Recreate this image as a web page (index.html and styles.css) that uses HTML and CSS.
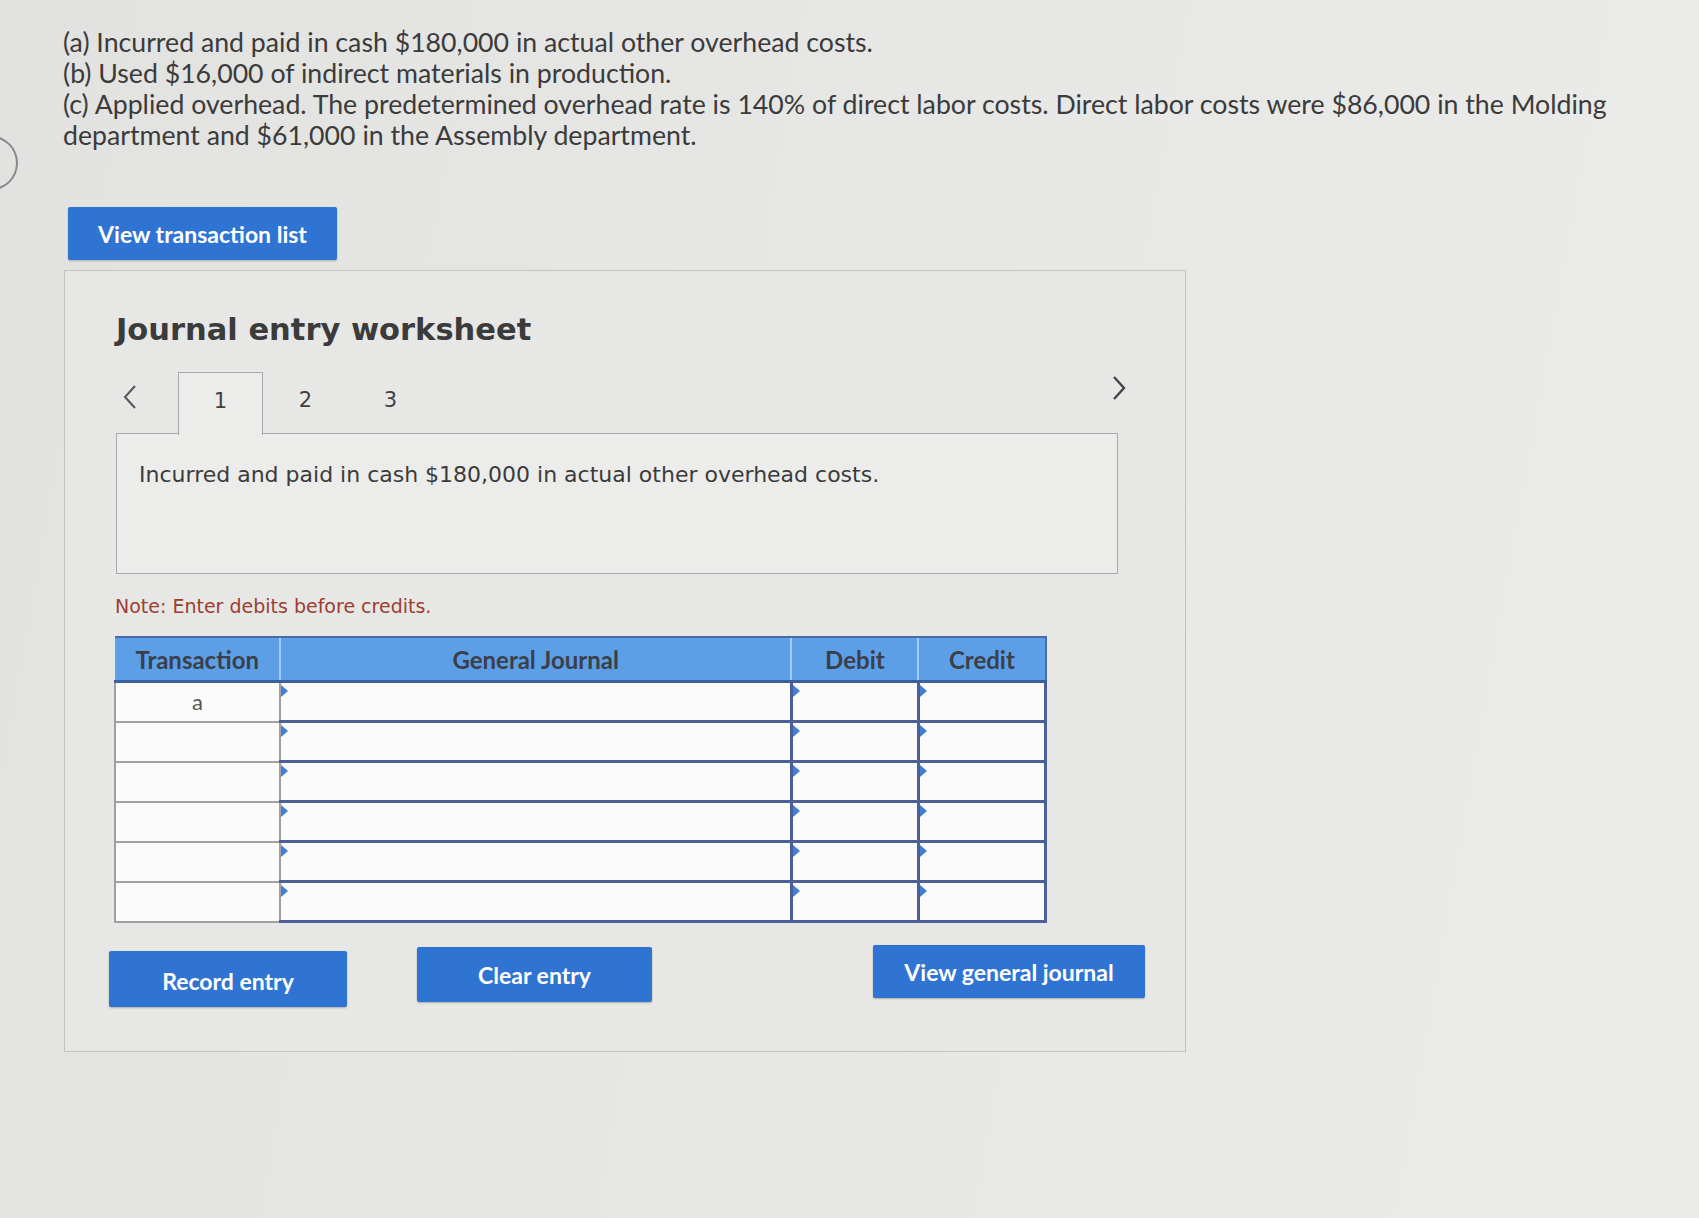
FILE: index.html
```html
<!DOCTYPE html>
<html lang="en">
<head>
    <meta charset="UTF-8">
    <meta name="viewport" content="width=device-width, initial-scale=1.0">
    <title>Journal entry worksheet</title>
    <link rel="stylesheet" href="styles.css">
</head>
<body>
    <div class="side-knob"></div>
    <div class="page">
        <div class="prompt">
            <p>(a) Incurred and paid in cash $180,000 in actual other overhead costs.</p>
            <p>(b) Used $16,000 of indirect materials in production.</p>
            <p>(c) Applied overhead. The predetermined overhead rate is 140% of direct labor costs. Direct labor costs were $86,000 in the Molding<br>department and $61,000 in the Assembly department.</p>
        </div>

        <button class="btn btn-list">View transaction list</button>

        <div class="worksheet">
            <h2 class="ws-title">Journal entry worksheet</h2>

            <div class="tabs">
                <span class="arrow arrow-prev">
                    <svg width="18" height="26" viewBox="0 0 18 26"><path d="M14 2 L4 13 L14 24" fill="none" stroke="#555" stroke-width="2"/></svg>
                </span>
                <span class="tab active">1</span>
                <span class="tab">2</span>
                <span class="tab">3</span>
                <span class="arrow arrow-next">
                    <svg width="18" height="26" viewBox="0 0 18 26"><path d="M4 2 L14 13 L4 24" fill="none" stroke="#444" stroke-width="2.4"/></svg>
                </span>
            </div>
            <div class="tab-body">
                Incurred and paid in cash $180,000 in actual other overhead costs.
            </div>

            <p class="note">Note: Enter debits before credits.</p>

            <table class="journal">
                <tr>
                    <th class="c-tr">Transaction</th>
                    <th class="c-gj">General Journal</th>
                    <th class="c-amt">Debit</th>
                    <th class="c-amt">Credit</th>
                </tr>
                <tr>
                    <td class="tr">a</td>
                    <td class="entry"></td>
                    <td class="entry"></td>
                    <td class="entry"></td>
                </tr>
                <tr>
                    <td class="tr"></td>
                    <td class="entry"></td>
                    <td class="entry"></td>
                    <td class="entry"></td>
                </tr>
                <tr>
                    <td class="tr"></td>
                    <td class="entry"></td>
                    <td class="entry"></td>
                    <td class="entry"></td>
                </tr>
                <tr>
                    <td class="tr"></td>
                    <td class="entry"></td>
                    <td class="entry"></td>
                    <td class="entry"></td>
                </tr>
                <tr>
                    <td class="tr"></td>
                    <td class="entry"></td>
                    <td class="entry"></td>
                    <td class="entry"></td>
                </tr>
                <tr>
                    <td class="tr"></td>
                    <td class="entry"></td>
                    <td class="entry"></td>
                    <td class="entry"></td>
                </tr>
            </table>

            <div class="actions">
                <button class="btn btn-record">Record entry</button>
                <button class="btn btn-clear">Clear entry</button>
                <button class="btn btn-view">View general journal</button>
            </div>
        </div>
    </div>
</body>
</html>
```

FILE: styles.css
```css
body {
    margin: 0;
    background: linear-gradient(100deg, #e2e2e0 0%, #e7e7e5 50%, #ebebe9 100%);
    min-height: 1218px;
    font-family: Lato, "Liberation Sans", sans-serif;
    color: #3b3b3b;
}
.side-knob {
    position: absolute;
    left: -34px;
    top: 136px;
    width: 48px;
    height: 50px;
    border: 2px solid #8a8a8a;
    border-radius: 50%;
}
.page {
    padding: 27px 0 0 63px;
}
.prompt p {
    margin: 0;
    font-size: 26.7px;
    line-height: 31px;
}
.btn {
    background-color: #2f74d2;
    color: white;
    border: none;
    border-radius: 2px;
    font-family: Lato, "Liberation Sans", sans-serif;
    font-weight: bold;
    font-size: 23px;
    cursor: pointer;
    box-shadow: 0 1px 2px rgba(0, 0, 0, 0.25);
}
.btn-list {
    display: block;
    margin: 56px 0 0 5px;
    width: 269px;
    height: 53px;
}
.worksheet {
    margin: 10px 0 0 1px;
    width: 1122px;
    height: 782px;
    border: 1px solid #c2c2c0;
    background-color: #e7e7e5;
    box-sizing: border-box;
    padding: 41px 0 0 51px;
}
.ws-title {
    margin: 0;
    font-family: "DejaVu Sans", Verdana, sans-serif;
    font-size: 30.5px;
    line-height: 36px;
    color: #3b3b3b;
}
.tabs {
    display: flex;
    align-items: flex-start;
    width: 1002px;
    height: 61px;
    margin-top: 24px;
    font-family: "DejaVu Sans", Verdana, sans-serif;
    font-size: 21px;
    color: #3f3f3f;
}
.arrow {
    display: flex;
    align-items: center;
    height: 46px;
}
.arrow-prev {
    width: 62px;
    padding-left: 5px;
    box-sizing: border-box;
    margin-top: 2px;
}
.arrow-next {
    margin-left: auto;
    margin-right: -10px;
    margin-top: -7px;
}
.tab {
    width: 85px;
    height: 62px;
    box-sizing: border-box;
    padding-top: 16px;
    text-align: center;
    position: relative;
    z-index: 1;
}
.tab.active {
    border: 1px solid #a9a9a9;
    border-bottom: none;
    background-color: #ececea;
    height: 63px;
}
.tab-body {
    width: 1002px;
    height: 141px;
    box-sizing: border-box;
    border: 1px solid #a9a9a9;
    background-color: #ececea;
    padding: 28px 0 0 22px;
    font-family: "DejaVu Sans", Verdana, sans-serif;
    font-size: 22px;
    line-height: 26px;
    color: #3b3b3b;
}
.note {
    margin: 20px 0 0 -1px;
    font-family: "DejaVu Sans", Verdana, sans-serif;
    font-size: 19px;
    line-height: 24px;
    color: #9c3f31;
}
.journal {
    margin: 18px 0 0 -2px;
    border-collapse: collapse;
    width: 933px;
    font-family: Lato, "Liberation Sans", sans-serif;
}
.journal th {
    height: 42px;
    background-color: #5d9fe7;
    color: #3a3f4a;
    font-size: 24px;
    font-weight: bold;
    text-align: center;
    border-left: 2px solid #a8c9f0;
    border-bottom: 3px solid #3e5f9e;
    border-top: 2px solid #4b6aa6;
    padding: 0;
}
.journal th:first-child {
    border-left: 1px solid #9a9a9a;
}
.journal th:last-child {
    border-right: 2px solid #4b6aa6;
}
.c-tr { width: 164px; }
.c-gj { width: 516px; }
.c-amt { width: 126px; }
.journal td {
    height: 37px;
    background-color: #fbfbfb;
    padding: 0;
}
.journal td.tr {
    border: 2px solid #a0a0a0;
    border-top: none;
    text-align: center;
    font-size: 22px;
    color: #555;
}
.journal td.entry {
    border: 3px solid #4c5f96;
    border-top: none;
    border-left-width: 2px;
    position: relative;
}
.journal td.entry::before {
    content: "";
    position: absolute;
    left: 0;
    top: 2px;
    border-top: 6px solid transparent;
    border-bottom: 6px solid transparent;
    border-left: 7px solid #3f7fd6;
}
.actions {
    display: flex;
    align-items: flex-start;
    margin-top: 22px;
}
.btn-record {
    width: 238px;
    height: 56px;
    margin: 6px 0 0 -7px;
    padding-top: 4px;
}
.btn-clear {
    width: 235px;
    height: 55px;
    margin: 2px 0 0 70px;
}
.btn-view {
    width: 272px;
    height: 53px;
    margin-left: 221px;
}
```
